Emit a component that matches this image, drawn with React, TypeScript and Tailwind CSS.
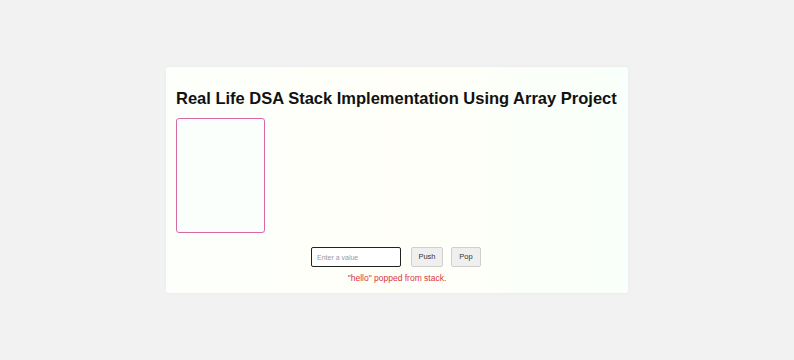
import { useState } from 'react'

export default function App() {
  const [value, setValue] = useState('')
  const [stack, setStack] = useState<string[]>([])
  const [message, setMessage] = useState('"hello" popped from stack.')

  const push = () => {
    if (!value.trim()) return
    setStack([...stack, value])
    setMessage(`"${value}" pushed to stack.`)
    setValue('')
  }

  const pop = () => {
    if (stack.length === 0) {
      setMessage('Stack is empty.')
      return
    }
    const top = stack[stack.length - 1]
    setStack(stack.slice(0, -1))
    setMessage(`"${top}" popped from stack.`)
  }

  return (
    <div className="min-h-[360px] bg-[#f2f2f2] pt-[67px] font-['Liberation_Sans',Arial,sans-serif]">
      <div className="mx-auto w-[462px] rounded-[3px] bg-gradient-to-r from-[#fdfffc] via-[#fffff8] to-[#f9fffa] px-[10px] pb-[9px] pt-[21px] shadow-[0_0_4px_rgba(0,0,0,0.04)]">
        <h1 className="whitespace-nowrap text-[16.5px] font-bold leading-[21px] text-[#111]">
          Real Life DSA Stack Implementation Using Array Project
        </h1>

        <div className="mt-[9px] flex h-[115px] w-[89px] flex-col-reverse gap-1 rounded-[3px] border-[1.5px] border-[#d86aa3] bg-[#fbfffb] p-1">
          {stack.map((item, i) => (
            <div key={i} className="rounded-sm bg-[#e8f5e9] py-0.5 text-center text-[10px] text-[#333]">
              {item}
            </div>
          ))}
        </div>

        <div className="mr-[2px] mt-[14px] flex items-center justify-center">
          <input
            value={value}
            onChange={(e) => setValue(e.target.value)}
            placeholder="Enter a value"
            className="h-[20px] w-[90px] rounded-[2px] border-[1.5px] border-[#222] bg-white px-[5px] text-[7px] text-[#333] outline-none placeholder:text-[#999]"
          />
          <button
            onClick={push}
            className="ml-[10px] h-[20px] w-[32px] rounded-[2px] border border-[#cfcfcf] bg-[#efefef] text-[7.5px] text-[#333]"
          >
            Push
          </button>
          <button
            onClick={pop}
            className="ml-[8px] h-[20px] w-[30px] rounded-[2px] border border-[#cfcfcf] bg-[#efefef] text-[7.5px] text-[#333]"
          >
            Pop
          </button>
        </div>

        <p className="mt-[5px] text-center text-[8.5px] leading-[12px] text-[#d9343f]">{message}</p>
      </div>
    </div>
  )
}
